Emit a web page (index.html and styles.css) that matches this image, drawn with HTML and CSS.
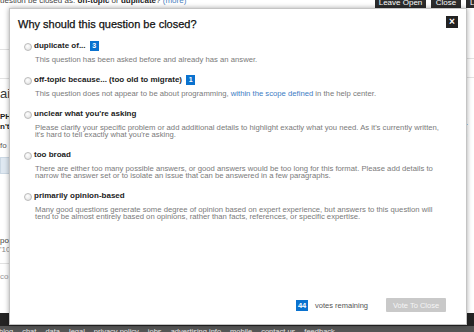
FILE: index.html
```html
<!DOCTYPE html>
<html lang="en">
<head>
    <meta charset="UTF-8">
    <meta name="viewport" content="width=device-width, initial-scale=1.0">
    <title>Close question</title>
    <link rel="stylesheet" href="styles.css">
</head>
<body>

    <!-- Question page behind the dialog -->
    <div class="page">
        <div class="topbar">
            <span class="notice">uestion be closed as: <b>off-topic</b> or <b>duplicate</b>? <a href="#">(more)</a></span>
            <div class="review-actions">
                <button>Leave Open</button>
                <button>Close</button>
                <button>Leave</button>
            </div>
        </div>

        <div class="page-body">
            <div class="left-col">
                <div class="rule first"></div>
                <div class="rule second"></div>
                <div class="q-title">ail</div>
                <div class="q-bold first">PHP</div>
                <div class="q-bold">n't</div>
                <div class="q-text">fo</div>
                <div class="q-tags"></div>
                <div class="q-meta">po</div>
                <div class="q-meta small">'10</div>
                <div class="rule third"></div>
                <div class="q-meta comment">co</div>
            </div>
            <div class="spacer"></div>
            <div class="right-col">
                <div class="rule first"></div>
                <div class="rule second"></div>
                <div class="side-text first">a</div>
                <div class="side-text">ir</div>
                <div class="side-text link">h</div>
            </div>
        </div>

        <div class="site-footer">
            <div class="footer-band"></div>
            <nav class="footer-links">
                <a href="#">blog</a>
                <a href="#">chat</a>
                <a href="#">data</a>
                <a href="#">legal</a>
                <a href="#">privacy policy</a>
                <a href="#">jobs</a>
                <a href="#">advertising info</a>
                <a href="#">mobile</a>
                <a href="#">contact us</a>
                <a href="#">feedback</a>
            </nav>
        </div>
    </div>

    <!-- Close dialog -->
    <div class="modal">
        <div class="modal-head">
            <h2>Why should this question be closed?</h2>
            <span class="close-x">&times;</span>
        </div>

        <ul class="reasons">
            <li class="reason">
                <span class="radio"></span>
                <div>
                    <div class="reason-title">duplicate of... <span class="badge">3</span></div>
                    <p class="reason-desc">This question has been asked before and already has an answer.</p>
                </div>
            </li>
            <li class="reason">
                <span class="radio"></span>
                <div>
                    <div class="reason-title">off-topic because... (too old to migrate) <span class="badge">1</span></div>
                    <p class="reason-desc">This question does not appear to be about programming, <a href="#">within the scope defined</a> in the help center.</p>
                </div>
            </li>
            <li class="reason">
                <span class="radio"></span>
                <div>
                    <div class="reason-title">unclear what you're asking</div>
                    <p class="reason-desc">Please clarify your specific problem or add additional details to highlight exactly what you need. As it's currently written, it's hard to tell exactly what you're asking.</p>
                </div>
            </li>
            <li class="reason">
                <span class="radio"></span>
                <div>
                    <div class="reason-title">too broad</div>
                    <p class="reason-desc">There are either too many possible answers, or good answers would be too long for this format. Please add details to narrow the answer set or to isolate an issue that can be answered in a few paragraphs.</p>
                </div>
            </li>
            <li class="reason">
                <span class="radio"></span>
                <div>
                    <div class="reason-title">primarily opinion-based</div>
                    <p class="reason-desc">Many good questions generate some degree of opinion based on expert experience, but answers to this question will tend to be almost entirely based on opinions, rather than facts, references, or specific expertise.</p>
                </div>
            </li>
        </ul>

        <div class="modal-foot">
            <span class="badge count">44</span>
            <span class="votes">votes remaining</span>
            <button class="vote-btn">Vote To Close</button>
        </div>
    </div>

</body>
</html>
```

FILE: styles.css
```css
/* Reset */
body, html {
    margin: 0;
    padding: 0;
    width: 100%;
    height: 100%;
    overflow: hidden;
    background-color: #fff;
    font-family: "Liberation Sans", Arial, sans-serif;
    color: #222;
}

/* Page behind the dialog */
.page {
    height: 332px;
    display: flex;
    flex-direction: column;
}

.topbar {
    height: 8px;
    display: flex;
    align-items: flex-end;
    justify-content: space-between;
    overflow: hidden;
    flex-shrink: 0;
}

.notice {
    font-size: 8px;
    line-height: 9px;
    margin-bottom: 3px;
    color: #444;
    white-space: nowrap;
}

.notice b {
    color: #222;
}

.notice a {
    color: #4a7fc0;
    text-decoration: none;
}

.review-actions {
    display: flex;
    gap: 5px;
    margin-right: -22px;
}

.review-actions button {
    height: 20px;
    padding: 9px 0 0;
    border: none;
    background-color: #2c2c2c;
    color: #fff;
    font-family: "Liberation Sans", Arial, sans-serif;
    font-size: 8px;
    line-height: 9px;
    white-space: nowrap;
    overflow: hidden;
}

.review-actions button:first-child {
    width: 51px;
}

.review-actions button:nth-child(2) {
    width: 30px;
}

.review-actions button:nth-child(3) {
    width: 30px;
    text-align: left;
    padding-left: 4px;
}

.page-body {
    flex: 1;
    display: flex;
}

.left-col {
    width: 12px;
    overflow: hidden;
    flex-shrink: 0;
}

.right-col {
    width: 12px;
    overflow: hidden;
    flex-shrink: 0;
    padding-left: 2px;
}

.spacer {
    flex: 1;
}

.rule {
    border-top: 1px solid #e2e2e2;
}

.left-col .rule.first { margin-top: 41px; }
.left-col .rule.second { margin-top: 28px; }
.left-col .rule.third { margin-top: 9px; }
.right-col .rule.first { margin-top: 50px; }
.right-col .rule.second { margin-top: 18px; }

.q-title {
    margin-top: 8px;
    font-size: 13px;
    line-height: 14px;
    color: #3b3b3b;
    white-space: nowrap;
}

.q-bold {
    font-size: 8px;
    line-height: 10px;
    font-weight: bold;
    color: #222;
    white-space: nowrap;
}

.q-bold.first {
    margin-top: 11px;
}

.q-text {
    margin-top: 9px;
    font-size: 8px;
    line-height: 10px;
    color: #555;
}

.q-tags {
    margin-top: 6px;
    height: 15px;
    background-color: #dfe8f1;
    border: 1px solid #cbd8e4;
}

.q-meta {
    margin-top: 62px;
    font-size: 8px;
    line-height: 9px;
    color: #444;
}

.q-meta.small {
    margin-top: 0;
    color: #888;
}

.q-meta.comment {
    margin-top: 8px;
    color: #999;
}

.side-text {
    font-size: 8px;
    line-height: 9px;
    font-weight: bold;
    color: #333;
}

.side-text.first {
    margin-top: 34px;
}

.side-text.link {
    color: #3a6fa8;
}

/* Site footer */
.site-footer {
    flex-shrink: 0;
    height: 19px;
    background-color: #555;
    overflow: hidden;
}

.footer-band {
    height: 13px;
    background-color: #242424;
}

.footer-links {
    display: flex;
    gap: 9px;
    margin-left: -1px;
    padding-top: 1px;
}

.footer-links a {
    color: #e6e6e6;
    font-size: 7.5px;
    line-height: 9px;
    text-decoration: none;
    white-space: nowrap;
}

/* Close dialog */
.modal {
    position: absolute;
    left: 9px;
    top: 8px;
    width: 458px;
    height: 317px;
    box-sizing: border-box;
    background-color: #fff;
    border: 1px solid #c4c4c4;
    box-shadow: 0 0 5px rgba(0, 0, 0, 0.35);
    padding: 7px 8px 0 8px;
    display: flex;
    flex-direction: column;
}

.modal-head {
    display: flex;
    justify-content: space-between;
    align-items: flex-start;
}

.modal-head h2 {
    margin: 1px 0 0;
    font-size: 11px;
    line-height: 14px;
    font-weight: normal;
    color: #111;
    -webkit-text-stroke: 0.25px #111;
}

.close-x {
    width: 12px;
    height: 12px;
    background-color: #222;
    color: #fff;
    font-size: 10px;
    line-height: 12px;
    text-align: center;
    font-weight: bold;
}

.reasons {
    list-style: none;
    margin: 10px 0 0;
    padding: 0 14px 0 0;
}

.reason {
    display: flex;
    align-items: flex-start;
    margin-bottom: 12px;
}

.radio {
    width: 6px;
    height: 6px;
    margin: 2px 2px 0 6px;
    border-radius: 50%;
    border: 0.5px solid #bbb;
    background: radial-gradient(circle at 40% 35%, #fff, #ddd);
    flex-shrink: 0;
}

.reason-title {
    font-size: 8px;
    line-height: 10px;
    font-weight: bold;
    color: #222;
}

.badge {
    display: inline-block;
    min-width: 9px;
    height: 10px;
    margin-left: 2px;
    background-color: #0a72cf;
    color: #fff;
    font-size: 7px;
    line-height: 10px;
    text-align: center;
    vertical-align: top;
}

.reason-desc {
    margin: 5px 0 0 1px;
    font-size: 7.7px;
    line-height: 7px;
    color: #7a7a7a;
}

.reason-desc a {
    color: #3d7cc4;
    text-decoration: none;
}

.modal-foot {
    margin-top: auto;
    display: flex;
    justify-content: flex-end;
    align-items: center;
    padding: 0 12px 12px 0;
}

.badge.count {
    width: 12px;
    height: 11px;
    margin: 0;
    font-size: 7.5px;
    line-height: 11px;
    font-weight: bold;
}

.votes {
    margin-left: 7px;
    font-size: 7.5px;
    color: #555;
}

.vote-btn {
    margin-left: 18px;
    width: 60px;
    height: 14px;
    padding: 0;
    border: none;
    border-radius: 1px;
    background-color: #c9c9c9;
    color: #f5f5f5;
    font-family: "Liberation Sans", Arial, sans-serif;
    font-size: 7.5px;
}
```
